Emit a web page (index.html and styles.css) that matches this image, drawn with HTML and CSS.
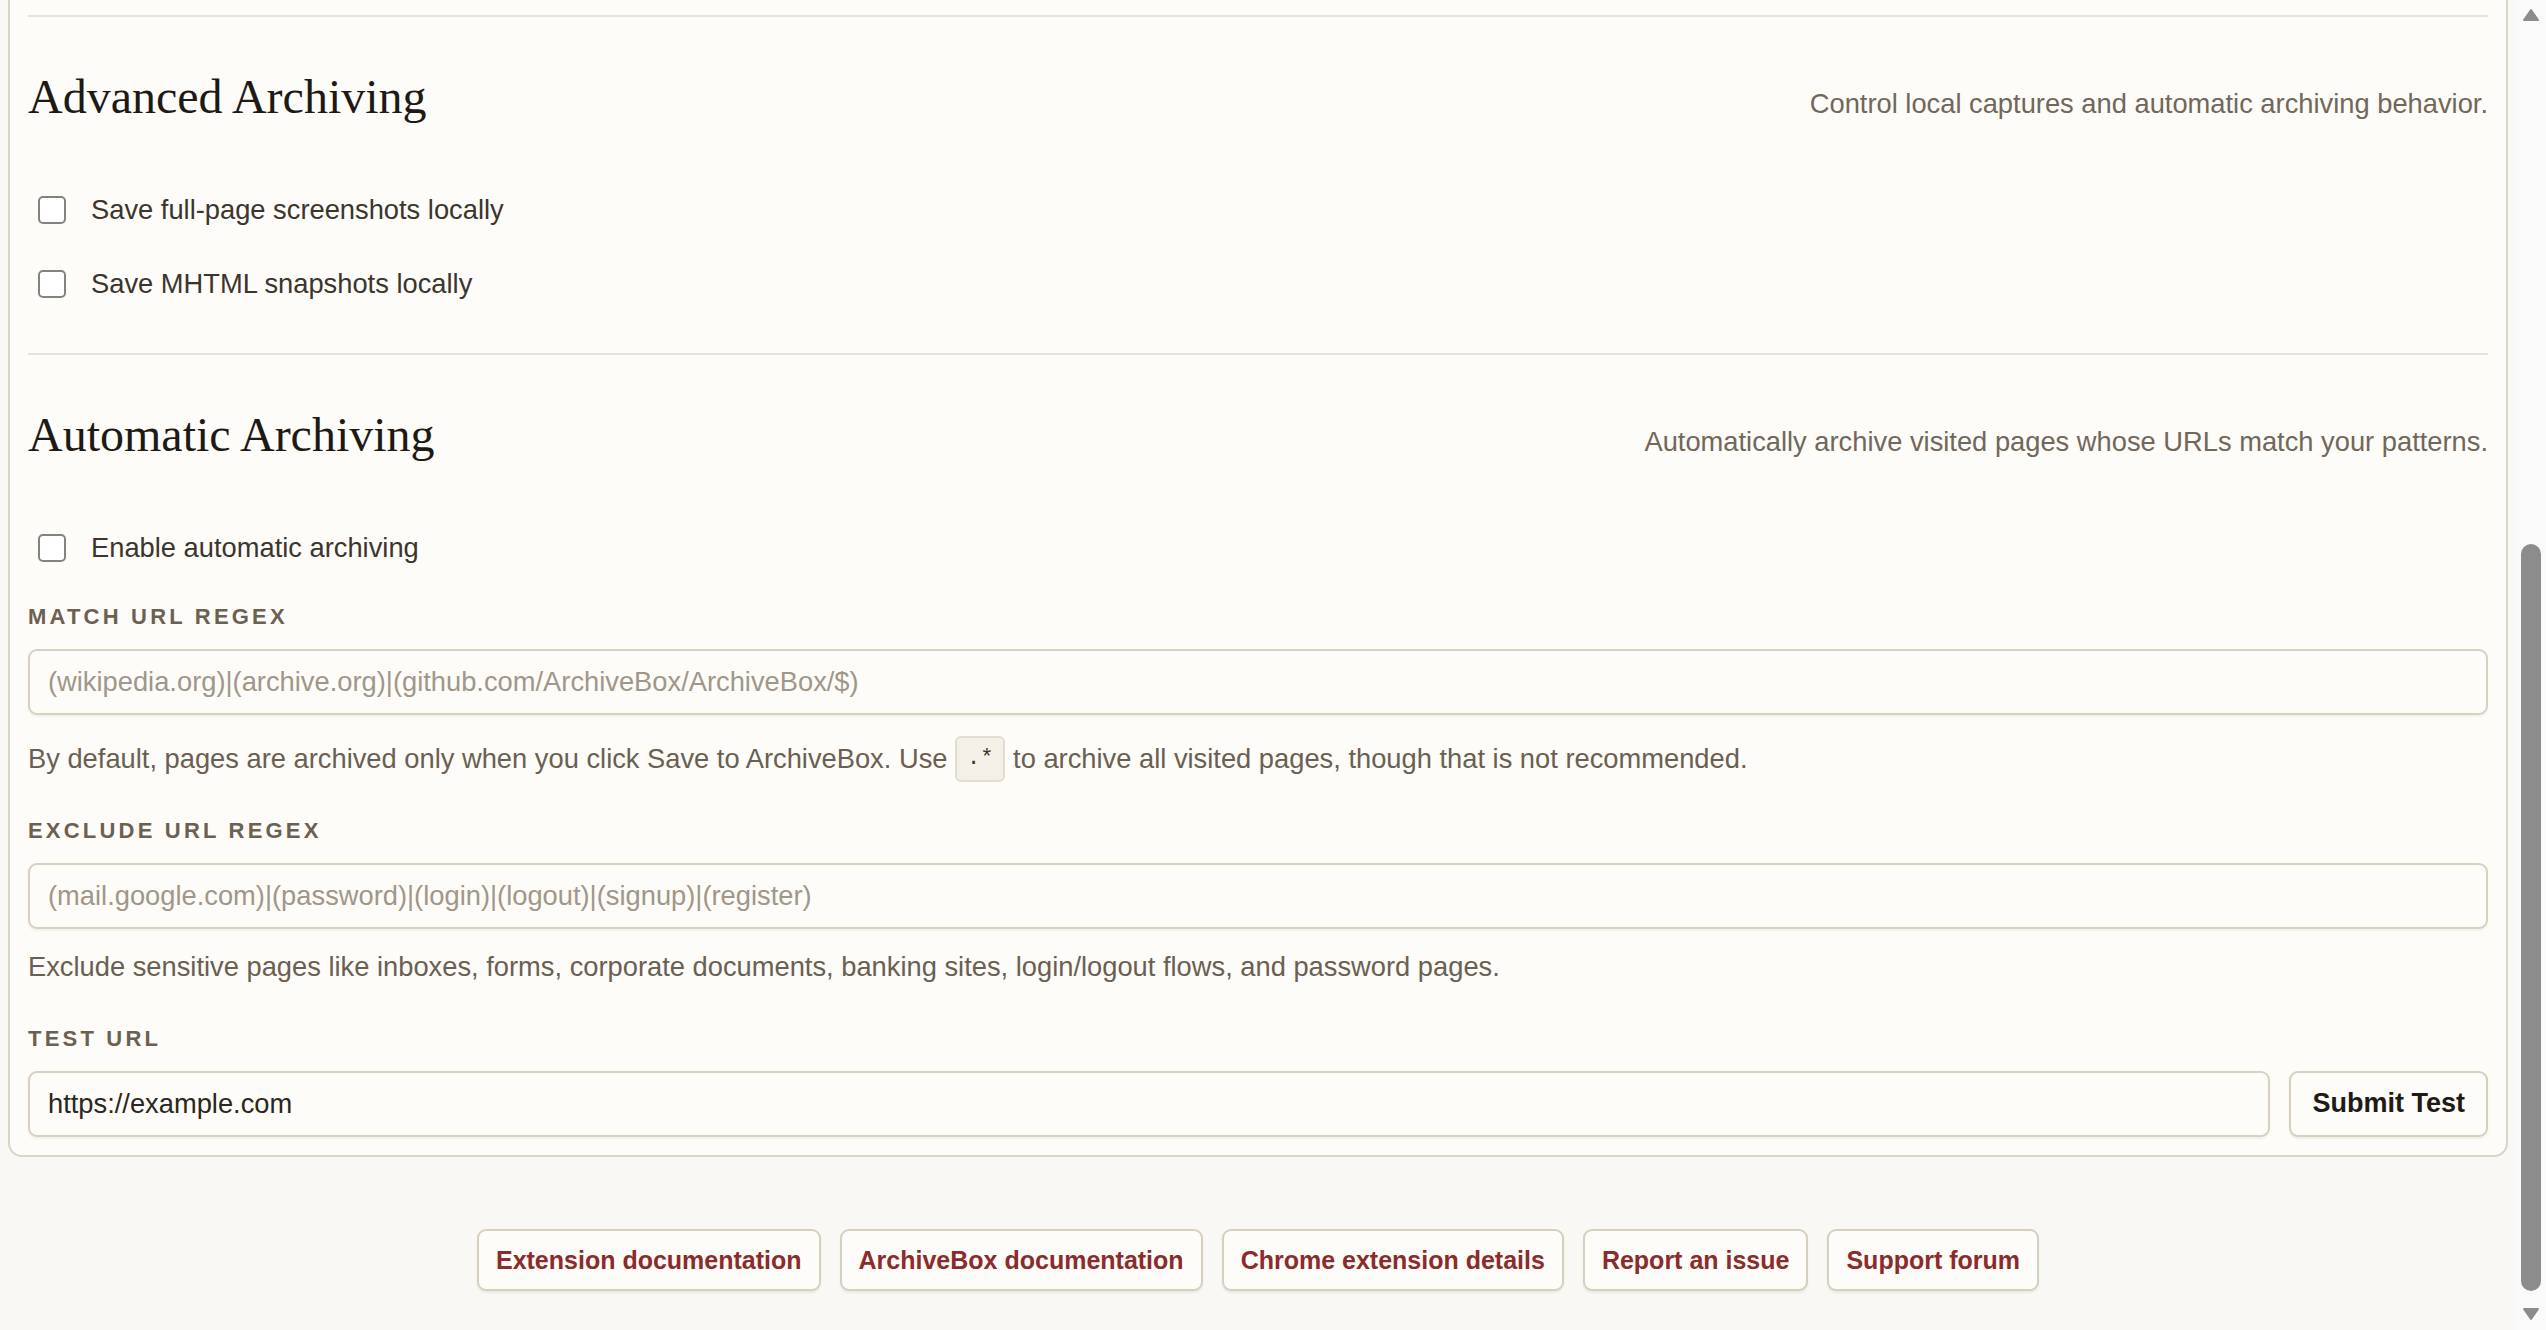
FILE: index.html
```html
<!DOCTYPE html>
<html lang="en">
<head>
  <meta charset="UTF-8"/>
  <meta name="viewport" content="width=device-width, initial-scale=1.0"/>
  <title>ArchiveBox Extension Options</title>
  <link rel="stylesheet" href="styles.css">
</head>
<body>
  <div class="page">
    <main class="card">
      <section class="section">
        <div class="section-head">
          <h2>Advanced Archiving</h2>
          <p>Control local captures and automatic archiving behavior.</p>
        </div>
        <div class="options">
          <label class="option"><input type="checkbox" id="saveScreenshots"/> Save full-page screenshots locally</label>
          <label class="option"><input type="checkbox" id="saveMhtml"/> Save MHTML snapshots locally</label>
        </div>
      </section>

      <section class="section">
        <div class="section-head">
          <h2>Automatic Archiving</h2>
          <p>Automatically archive visited pages whose URLs match your patterns.</p>
        </div>
        <div class="options">
          <label class="option"><input type="checkbox" id="autoArchive"/> Enable automatic archiving</label>
        </div>
        <div class="field first">
          <label for="matchRegex">Match URL regex</label>
          <input class="text-input" type="text" id="matchRegex" placeholder="(wikipedia.org)|(archive.org)|(github.com/ArchiveBox/ArchiveBox/$)"/>
          <p class="help">By default, pages are archived only when you click Save to ArchiveBox. Use <code>.*</code> to archive all visited pages, though that is not recommended.</p>
        </div>
        <div class="field">
          <label for="excludeRegex">Exclude URL regex</label>
          <input class="text-input" type="text" id="excludeRegex" placeholder="(mail.google.com)|(password)|(login)|(logout)|(signup)|(register)"/>
          <p class="help">Exclude sensitive pages like inboxes, forms, corporate documents, banking sites, login/logout flows, and password pages.</p>
        </div>
        <div class="field">
          <label for="testUrl">Test URL</label>
          <div class="test-row">
            <input class="text-input" type="text" id="testUrl" value="https://example.com"/>
            <button class="btn" type="button">Submit Test</button>
          </div>
        </div>
      </section>
    </main>

    <nav class="links">
      <a href="#">Extension documentation</a>
      <a href="#">ArchiveBox documentation</a>
      <a href="#">Chrome extension details</a>
      <a href="#">Report an issue</a>
      <a href="#">Support forum</a>
    </nav>
  </div>

  <div class="scrollbar" aria-hidden="true">
    <svg class="arrow" width="18" height="14" viewBox="0 0 18 14"><path d="M9 2 L16 12 L2 12 Z" fill="#8c8c8c" stroke="#8c8c8c" stroke-width="2" stroke-linejoin="round"/></svg>
    <div class="thumb"></div>
    <svg class="arrow" width="18" height="14" viewBox="0 0 18 14"><path d="M2 2 L16 2 L9 12 Z" fill="#8c8c8c" stroke="#8c8c8c" stroke-width="2" stroke-linejoin="round"/></svg>
  </div>
</body>
</html>
```

FILE: styles.css
```css
body { margin: 0; height: 100vh; overflow: hidden; display: flex; background: #f9f8f4; font-family: "Liberation Sans", Arial, sans-serif; font-size: 27.3px; color: #3b352d; }
.page { flex: 1; min-width: 0; padding: 0 8px; }

.scrollbar { flex: none; width: 30px; display: flex; flex-direction: column; align-items: center; padding: 8px 0 9px; box-sizing: border-box; background: #fafafa; }
.scrollbar .thumb { margin: auto 0 16px; width: 20px; height: 747px; border-radius: 10px; background: #8c8c8c; }

.card { background: #fdfcf8; border: 2px solid #dbd3c4; border-top: 0; border-radius: 0 0 14px 14px; padding: 15px 18px 18px; }
.section { padding: 51px 0 47px; border-top: 2px solid #e7e2d8; }
.section:last-child { padding-bottom: 0; }

.section-head { display: flex; justify-content: space-between; align-items: baseline; gap: 24px; margin-bottom: 62px; }
.section-head h2 { margin: 0; font: 400 48px/58px "Liberation Serif", Georgia, serif; color: #1d1a16; }
.section-head p { margin: 0; line-height: 40px; color: #71675a; }

.options { display: flex; flex-direction: column; gap: 30px; }
.option { display: flex; align-items: center; gap: 25px; height: 44px; padding-left: 10px; color: #3b352d; }
.option input { appearance: none; flex: none; width: 28px; height: 28px; margin: 0; border: 2px solid #85827d; border-radius: 5px; background: #fff; }

.field { margin-top: 36px; }
.field.first { margin-top: 32px; }
.field label { display: block; margin-bottom: 17px; font-size: 22px; line-height: 30px; font-weight: bold; letter-spacing: 3.2px; text-transform: uppercase; color: #6b6051; }

.text-input { box-sizing: border-box; width: 100%; height: 66px; padding: 0 18px; border: 2px solid #d9d0c0; border-radius: 9px; background: #fdfcf8; font: 27.3px "Liberation Sans", Arial, sans-serif; color: #2b2620; box-shadow: 0 2px 2px rgba(90, 70, 40, 0.06); outline: none; }
.text-input::placeholder { color: #a0978a; }

.help { margin: 18px 0 0; line-height: 1.5; color: #6a6052; }
.help code { display: inline-block; box-sizing: border-box; height: 46px; margin: 3px 0 -3px; padding: 0 10px; border: 2px solid #e3ddd0; border-radius: 6px; background: #f3f0e8; font: 22px/42px "Liberation Mono", monospace; vertical-align: 4px; color: #3a342c; }

.test-row { display: flex; gap: 19px; }
.test-row .text-input { flex: 1; }
.btn { box-sizing: border-box; flex: none; height: 66px; padding: 0 21px; border: 2px solid #d8cfbe; border-radius: 9px; background: #fdfcf8; font: bold 27px "Liberation Sans", Arial, sans-serif; color: #1e1a15; box-shadow: 0 2px 2px rgba(90, 70, 40, 0.08); cursor: pointer; }

.links { display: flex; justify-content: center; flex-wrap: wrap; gap: 19px; padding: 72px 0 31px; }
.links a { display: block; padding: 14px 17px; border: 2px solid #d8cfbe; border-radius: 9px; background: #fdfcf8; font-size: 25px; line-height: 30px; font-weight: bold; color: #8b2b2b; text-decoration: none; box-shadow: 0 2px 2px rgba(90, 70, 40, 0.08); }
```
